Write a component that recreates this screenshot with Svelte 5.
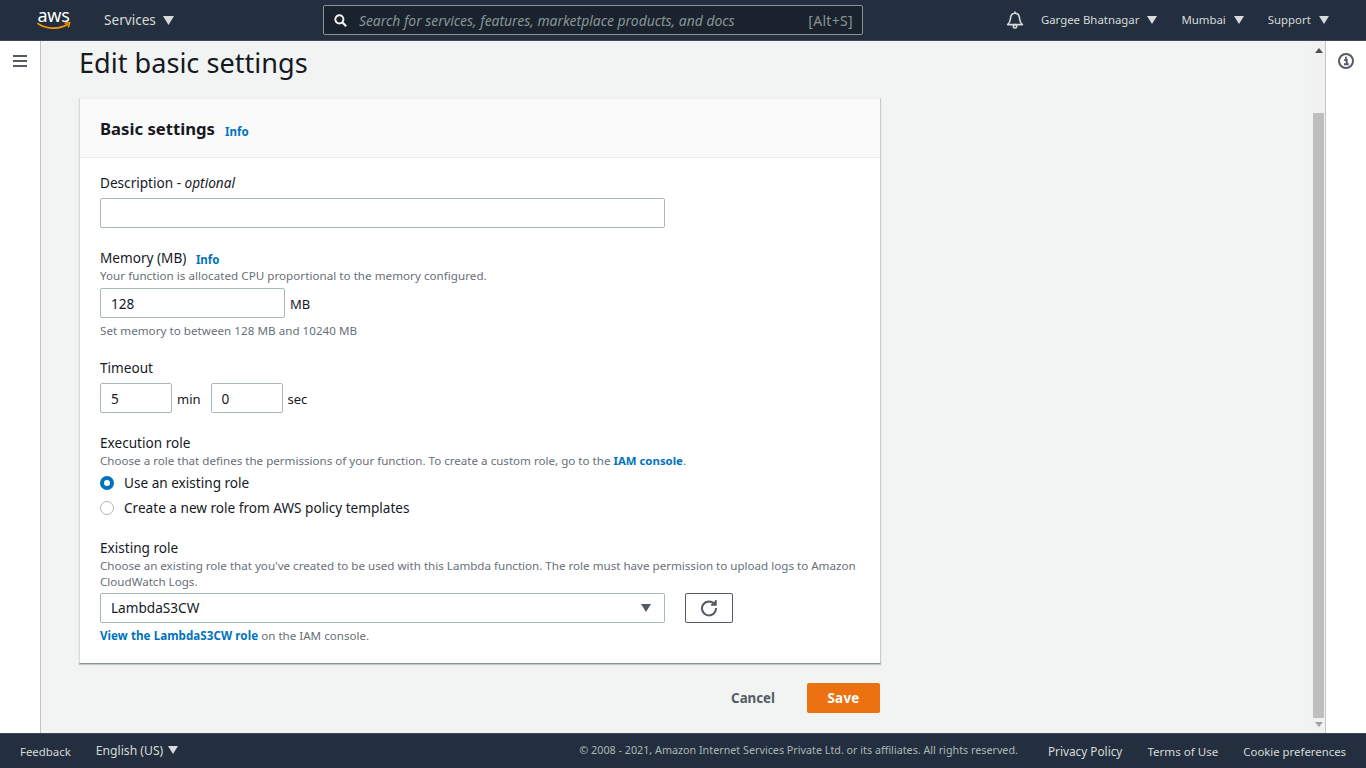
<script>
  const chevron = 'M0 0h12L6 10z';
</script>

<div class="shell">
  <header class="top">
    <div class="logo">
      <span class="aws">aws</span>
      <svg class="smile" width="34" height="9" viewBox="0 0 34 9" aria-hidden="true">
        <path d="M1 1.6C9 7.2 22 7.6 30.5 2.6" fill="none" stroke="#f90" stroke-width="1.7" stroke-linecap="round"/>
        <path d="M27.6 1.2 32.6 0.6 31.4 5.4" fill="none" stroke="#f90" stroke-width="1.5"/>
      </svg>
    </div>
    <span class="nav services">Services</span>
    <svg class="caret big" viewBox="0 0 12 10" preserveAspectRatio="none"><path d={chevron}/></svg>
    <div class="search">
      <svg class="mag" width="13" height="13" viewBox="0 0 16 16"><circle cx="6.6" cy="6.6" r="5" fill="none" stroke="#f2f3f3" stroke-width="2.4"/><path d="M10.4 10.4 15 15" stroke="#f2f3f3" stroke-width="2.8"/></svg>
      <span class="placeholder">Search for services, features, marketplace products, and docs</span>
      <span class="kbd">[Alt+S]</span>
    </div>
    <div class="right">
      <svg class="bell" width="18" height="18" viewBox="0 0 18 18" fill="none" stroke="#d5dbdb" stroke-width="1.6"><path d="M1.6 13.6c2-1.6 2.600-3 2.800-5.800C4.600 4.400 6.400 2.200 9 2.200s4.400 2.200 4.600 5.600c.2 2.800.8 4.200 2.800 5.800z" stroke-linejoin="round"/><path d="M9 .6v1.600"/><circle cx="9" cy="15.300" r="1.700"/></svg>
      <span class="nav small user">Gargee Bhatnagar</span>
      <svg class="caret" viewBox="0 0 12 10" preserveAspectRatio="none"><path d={chevron}/></svg>
      <span class="nav small mumbai">Mumbai</span>
      <svg class="caret" viewBox="0 0 12 10" preserveAspectRatio="none"><path d={chevron}/></svg>
      <span class="nav small support">Support</span>
      <svg class="caret" viewBox="0 0 12 10" preserveAspectRatio="none"><path d={chevron}/></svg>
    </div>
  </header>

  <div class="middle">
    <aside class="rail left">
      <svg width="14" height="12" viewBox="0 0 14 12"><path d="M0 1h14M0 6h14M0 11h14" stroke="#545b64" stroke-width="2"/></svg>
    </aside>
    <main class="content">
      <h1>Edit basic settings</h1>
      <section class="card">
        <div class="card-head">
          <h2>Basic settings</h2>
          <a class="info">Info</a>
        </div>
        <div class="card-body">
          <div class="field f-desc">
            <div class="label">Description - <i>optional</i></div>
            <div class="input wide"></div>
          </div>
          <div class="field f-mem">
            <div class="label">Memory (MB) <a class="info in-label">Info</a></div>
            <div class="hint">Your function is allocated CPU proportional to the memory configured.</div>
            <div class="row">
              <div class="input mem">128</div>
              <span class="unit">MB</span>
            </div>
            <div class="hint after">Set memory to between 128 MB and 10240 MB</div>
          </div>
          <div class="field f-time">
            <div class="label">Timeout</div>
            <div class="row timeout">
              <div class="input time">5</div>
              <span class="unit">min</span>
              <div class="input time second">0</div>
              <span class="unit">sec</span>
            </div>
          </div>
          <div class="field f-role">
            <div class="label">Execution role</div>
            <div class="hint">Choose a role that defines the permissions of your function. To create a custom role, go to the <a class="link iam">IAM console</a>.</div>
            <div class="radio-row first"><span class="radio on"></span><span>Use an existing role</span></div>
            <div class="radio-row"><span class="radio"></span><span>Create a new role from AWS policy templates</span></div>
          </div>
          <div class="field f-existing">
            <div class="label">Existing role</div>
            <div class="hint">Choose an existing role that you've created to be used with this Lambda function. The role must have permission to upload logs to Amazon CloudWatch Logs.</div>
            <div class="row select-row">
              <div class="input select wide">
                <span class="value">LambdaS3CW</span>
                <svg width="10" height="8" viewBox="0 0 12 10" preserveAspectRatio="none"><path d={chevron} fill="#545b64"/></svg>
              </div>
              <div class="refresh">
                <svg width="18" height="18" viewBox="0 0 18 18" fill="none" stroke="#545b64" stroke-width="2"><path d="M14.700 5.300A7 7 0 1 0 16 9"/><path d="M16 1v5h-5" stroke-width="1.400" fill="#545b64"/></svg>
              </div>
            </div>
            <div class="hint after view"><a class="link">View the LambdaS3CW role</a> on the IAM console.</div>
          </div>
        </div>
      </section>
      <div class="actions">
        <span class="cancel">Cancel</span>
        <span class="save">Save</span>
      </div>
    </main>
    <div class="scrollbar">
      <svg class="arrow up" width="8" height="5" viewBox="0 0 8 5"><path d="M4 0l4 5H0z" fill="#505050"/></svg>
      <div class="thumb"></div>
      <svg class="arrow down" width="8" height="5" viewBox="0 0 8 5"><path d="M0 0h8L4 5z" fill="#a3a3a3"/></svg>
    </div>
    <aside class="rail side">
      <svg width="16" height="16" viewBox="0 0 16 16"><circle cx="8" cy="8" r="7" fill="none" stroke="#545b64" stroke-width="2"/><path d="M6.200 7h2.500v4.200M6 11.300h4.800M8 3.800v1.900" fill="none" stroke="#545b64" stroke-width="2"/></svg>
    </aside>
  </div>

  <footer class="foot">
    <span class="feedback">Feedback</span>
    <span class="lang">English (US)</span>
    <svg class="caret" viewBox="0 0 12 10" preserveAspectRatio="none"><path d={chevron}/></svg>
    <span class="copy">© 2008 - 2021, Amazon Internet Services Private Ltd. or its affiliates. All rights reserved.</span>
    <span class="flink privacy">Privacy Policy</span>
    <span class="flink terms">Terms of Use</span>
    <span class="flink cookie">Cookie preferences</span>
  </footer>
</div>

<style>
  :global(body) { margin: 0; overflow: hidden; }
  .shell {
    width: 1366px; height: 768px; display: flex; flex-direction: column; overflow: hidden;
    font-family: "Noto Sans", sans-serif; color: #16191f; font-size: 13.6px;
  }
  .top {
    height: 40px; flex: none; background: #232f3e; border-bottom: 1px solid #414750;
    display: flex; align-items: center; box-sizing: content-box;
  }
  .logo { width: 34px; margin-left: 36px; position: relative; height: 40px; flex: none; }
  .aws {
    position: absolute; left: 1.5px; top: 3px; color: #fff; font-size: 18px; line-height: 24px;
    font-family: "Noto Sans", sans-serif; letter-spacing: -0.3px;
  }
  .smile { position: absolute; left: 1px; top: 22px; }
  .nav { color: #d5dbdb; white-space: nowrap; }
  .services { margin-left: 34px; font-size: 13.6px; position: relative; top: -1px; }
  .caret { width: 11px; height: 9px; fill: #d5dbdb; flex: none; }
  .caret.big { margin-left: 7px; }
  .search {
    margin-left: 149px; width: 540px; height: 30px; box-sizing: border-box;
    background: #1a222d; border: 1px solid #879596; border-radius: 2px;
    display: flex; align-items: center; padding: 0 9px 0 10px;
  }
  .mag { flex: none; }
  .placeholder { margin-left: 12px; font-style: italic; color: #879596; font-size: 13.9px; flex: 1; white-space: nowrap; }
  .kbd { color: #879596; font-size: 14px; letter-spacing: .3px; }
  .right { display: flex; align-items: center; margin-left: 143px; }
  .small { font-size: 11.4px; position: relative; top: -1px; }
  .user { margin-left: 17px; }
  .right .caret { margin-left: 8px; width: 10px; height: 8px; }
  .mumbai { margin-left: 24px; }
  .support { margin-left: 24px; }

  .middle { flex: 1; display: flex; min-height: 0; background: #f2f3f3; }
  .rail { flex: none; background: #fff; display: flex; justify-content: center; box-sizing: border-box; }
  .rail.left { width: 41px; border-right: 1px solid #c4c6c6; padding-top: 14px; padding-right: 1px; }
  .rail.side { width: 41px; border-left: 1px solid #c4c6c6; padding-top: 12px; }
  .content { flex: 1; padding: 0 0 0 38px; min-width: 0; overflow: hidden; }
  h1 { margin: 0; font-weight: 400; font-size: 27.1px; line-height: 44px; height: 57px; color: #16191f; }
  .card {
    width: 802px; box-sizing: border-box; background: #fff;
    border-left: 1px solid #d5dbdb; border-right: 1px solid #c4cccc;
    border-top: 1px solid #eaeded; border-bottom: 1px solid #879596;
    box-shadow: 0 1px 1px rgba(0,28,36,.2);
  }
  .card-head {
    height: 59px; box-sizing: border-box; background: #fafafa; border-bottom: 1px solid #eaeded;
    padding: 0 20px; display: flex; align-items: center; gap: 10px;
  }
  h2 { margin: 2px 0 0; font-size: 16.7px; font-weight: 700; line-height: 22px; color: #16191f; }
  .info { color: #0073bb; font-size: 11.5px; font-weight: 700; position: relative; top: 3px; }
  .in-label { top: 1px; margin-left: 6px; line-height: 1; }
  .card-body { padding: 15px 20px 20px; height: 505px; box-sizing: border-box; }
  .label { font-size: 13.6px; line-height: 20px; color: #16191f; }
  .hint { font-size: 11.6px; line-height: 16px; color: #687078; }
  .f-mem .hint { letter-spacing: .04px; }
  .field { display: flow-root; }
  .input {
    height: 30px; box-sizing: border-box; background: #fff; border: 1px solid #aab7b8; border-radius: 2px;
    padding: 0 10px; font-size: 13.6px; line-height: 30px; color: #16191f;
  }
  .wide { width: 565px; }
  .f-desc .input { margin-top: 5px; }
  .f-mem { margin-top: 20px; }
  .row { display: flex; align-items: center; }
  .f-mem .row { margin-top: 4px; }
  .mem { width: 185px; }
  .unit { margin-left: 5px; font-size: 13px; position: relative; top: 1px; }
  .after { margin-top: 5px; }
  .f-time { margin-top: 19px; }
  .f-time .row { margin-top: 5px; }
  .time { width: 72px; }
  .second { margin-left: 10px; }
  .f-role { margin-top: 20px; }
  .radio-row { display: flex; align-items: center; height: 25px; gap: 10px; line-height: 20px; }
  .radio-row.first { margin-top: 1px; }
  .radio { width: 14px; height: 14px; box-sizing: border-box; border-radius: 50%; border: 1px solid #aab7b8; background: #fff; flex: none; }
  .radio.on { border: 4px solid #0073bb; }
  .link { color: #0073bb; font-weight: 700; }
  .iam { font-size: 11.4px; }
  .view .link { letter-spacing: .06px; }
  .f-existing { margin-top: 18px; }
  .select-row { margin-top: 3px; }
  .select { display: flex; align-items: center; justify-content: space-between; padding-right: 13px; }
  .value { position: relative; top: 0; }
  .refresh {
    margin-left: 20px; width: 48px; height: 30px; box-sizing: border-box; border: 1px solid #545b64; border-radius: 2px;
    display: flex; align-items: center; justify-content: center;
  }
  .view { margin-top: 5px; }
  .actions { width: 801px; display: flex; justify-content: flex-end; align-items: center; margin-top: 19px; }
  .cancel { font-weight: 700; font-size: 13.3px; color: #545b64; margin-right: 32px; }
  .save {
    width: 73px; height: 30px; box-sizing: border-box; padding-bottom: 1px; background: #ec7211; color: #fff; font-weight: 700; font-size: 13.3px; letter-spacing: .3px; border-radius: 2px;
    display: flex; align-items: center; justify-content: center;
  }
  .scrollbar { width: 14px; flex: none; background: #f1f1f1; position: relative; }
  .arrow { position: absolute; left: 4px; }
  .up { top: 7px; }
  .down { bottom: 6px; }
  .thumb { position: absolute; left: 2px; right: 1px; top: 72px; bottom: 15px; background: #bebebe; }

  .foot {
    height: 35px; flex: none; box-sizing: border-box; background: #232f3e; border-top: 1px solid #414750;
    display: flex; align-items: center; color: #d5dbdb; font-size: 11.4px; white-space: nowrap;
  }
  .feedback { margin-left: 20px; }
  .lang { margin-left: 25px; font-size: 12.2px; position: relative; top: -1px; }
  .foot .caret { margin-left: 5px; width: 10px; height: 8px; position: relative; top: -1px; }
  .copy { margin-left: auto; font-size: 10.75px; color: #aab7b8; position: relative; top: -1px; }
  .flink { font-size: 11.6px; }
  .privacy { margin-left: 30px; font-size: 11.8px; }
  .terms { margin-left: 25px; }
  .cookie { margin-left: 25px; margin-right: 20px; font-size: 11.37px; }
</style>
